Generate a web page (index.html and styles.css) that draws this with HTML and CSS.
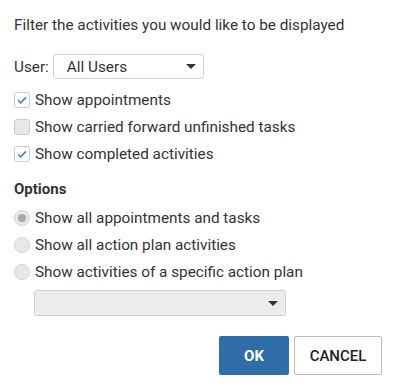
FILE: index.html
```html
<!DOCTYPE html>
<html lang="en">
<head>
    <meta charset="UTF-8">
    <meta name="viewport" content="width=device-width, initial-scale=1.0">
    <title>Activity filter</title>
    <link rel="stylesheet" href="styles.css">
</head>
<body>
    <div class="dialog">
        <p class="intro">Filter the activities you would like to be displayed</p>

        <div class="user-row">
            <span class="label">User:</span>
            <div class="select user-select">
                <span>All Users</span>
                <span class="caret"></span>
            </div>
        </div>

        <label class="row"><span class="check checked"><svg viewBox="0 0 16 16" width="16" height="16"><path d="M4 8.3l2.6 2.6L12 5.4" fill="none" stroke="#3b86d6" stroke-width="1.5"/></svg></span>Show appointments</label>
        <label class="row"><span class="check"></span>Show carried forward unfinished tasks</label>
        <label class="row"><span class="check checked"><svg viewBox="0 0 16 16" width="16" height="16"><path d="M4 8.3l2.6 2.6L12 5.4" fill="none" stroke="#3b86d6" stroke-width="1.5"/></svg></span>Show completed activities</label>

        <h4 class="heading">Options</h4>

        <label class="row"><span class="radio on"></span>Show all appointments and tasks</label>
        <label class="row"><span class="radio"></span>Show all action plan activities</label>
        <label class="row"><span class="radio"></span>Show activities of a specific action plan</label>

        <div class="select plan-select">
            <span></span>
            <span class="caret"></span>
        </div>

        <div class="buttons">
            <button class="btn btn-ok">OK</button>
            <button class="btn btn-cancel">CANCEL</button>
        </div>
    </div>
</body>
</html>
```

FILE: styles.css
```css
/* General styles */
body {
    margin: 0;
    font-family: Roboto, "Liberation Sans", sans-serif;
    font-size: 15.3px;
    color: #333;
    background: #fff;
}

.dialog {
    padding: 15px 14px 0 14px;
}

.intro {
    margin: 0 0 19px;
    line-height: 20px;
}

/* User select */
.user-row {
    display: flex;
    align-items: center;
    height: 25px;
    margin-bottom: 7px;
}

.label {
    margin-right: 4px;
}

.select {
    display: flex;
    align-items: center;
    justify-content: space-between;
    box-sizing: border-box;
    border: 1px solid #d0d0d0;
    border-radius: 3px;
}

.user-select {
    width: 151px;
    height: 25px;
    padding: 0 7px 0 13px;
    background: #fff;
}

.caret {
    width: 0;
    height: 0;
    border-left: 5px solid transparent;
    border-right: 5px solid transparent;
    border-top: 5px solid #333;
}

/* Check and radio rows */
.row {
    display: flex;
    align-items: center;
    height: 27px;
}

.check, .radio {
    box-sizing: border-box;
    width: 16px;
    height: 16px;
    margin-right: 5px;
    border: 1px solid #ccc;
    background: #e8e8e8;
    flex-shrink: 0;
}

.check {
    border-radius: 3px;
}

.check.checked {
    background: #fff;
}

.check svg {
    display: block;
    margin: -1px;
}

.radio {
    border-radius: 50%;
    border-color: #d4d4d4;
    display: flex;
    align-items: center;
    justify-content: center;
}

.radio.on::after {
    content: "";
    width: 8px;
    height: 8px;
    border-radius: 50%;
    background: #aaa;
}

.heading {
    margin: 12px 0 5px;
    font-size: 15px;
    font-weight: bold;
    line-height: 20px;
}

/* Plan select */
.plan-select {
    width: 252px;
    height: 26px;
    margin: 5px 0 0 20px;
    padding: 0 7px;
    background: #ececec;
}

/* Buttons */
.buttons {
    display: flex;
    justify-content: flex-end;
    gap: 5px;
    margin-top: 20px;
}

.btn {
    height: 39px;
    font-family: Roboto, "Liberation Sans", sans-serif;
    font-size: 15px;
    font-weight: 500;
    border-radius: 2px;
    cursor: pointer;
}

.btn-ok {
    width: 70px;
    background: #2f6ea9;
    color: #fff;
    border: none;
    font-weight: bold;
}

.btn-cancel {
    width: 88px;
    margin-right: -1px;
    background: #fff;
    color: #222;
    border: 1px solid #bbb;
}
```
